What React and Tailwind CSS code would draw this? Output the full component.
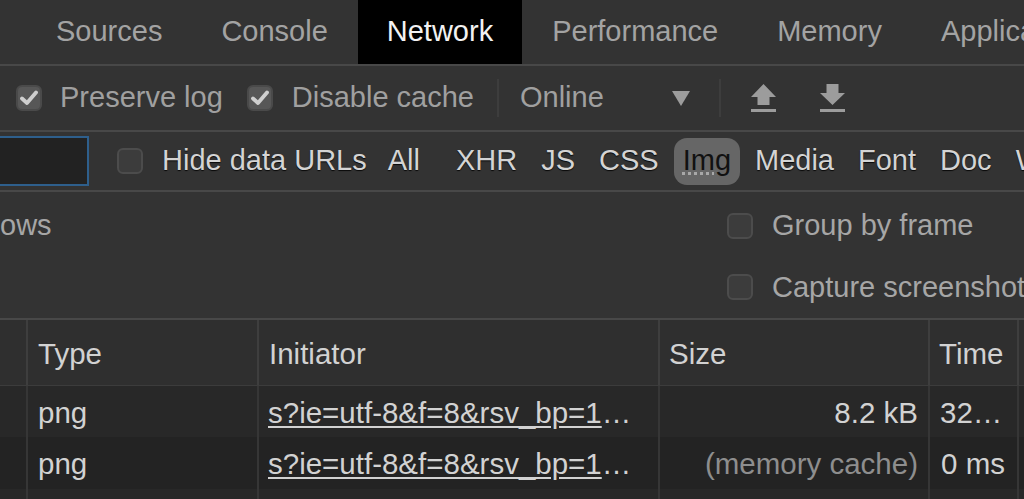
import React from 'react';

const FONT = "font-['Liberation_Sans',Arial,sans-serif]";

const Checkbox = ({ checked }) => (
  <div
    className={`w-[26px] h-[26px] rounded-[6px] border-2 flex items-center justify-center shrink-0 ${
      checked ? 'bg-[#575757] border-[#4a4a4a]' : 'bg-[#3c3c3c] border-[#4c4c4c]'
    }`}
  >
    {checked && (
      <svg width="18" height="16" viewBox="0 0 18 16">
        <path d="M2 8.5 L7 13 L16 2.5" fill="none" stroke="#cfcfcf" strokeWidth="3.8" strokeLinecap="round" strokeLinejoin="round" />
      </svg>
    )}
  </div>
);

const tabs = ['Sources', 'Console', 'Network', 'Performance', 'Memory', 'Application'];
const filters = ['XHR', 'JS', 'CSS', 'Img', 'Media', 'Font', 'Doc', 'WS'];

const Line = () => <div className="h-[2px] bg-[#484848]" />;

const App = () => {
  return (
    <div className={`w-[1024px] h-[499px] overflow-hidden bg-[#333333] ${FONT}`}>
      {/* Tabs */}
      <div className="h-[64px] flex items-stretch pl-[27px] whitespace-nowrap">
        {tabs.map((t) => (
          <div
            key={t}
            className={`px-[29px] mr-[1px] flex items-center text-[29px] shrink-0 ${
              t === 'Network' ? 'bg-black text-[#f2f2f2]' : 'text-[#a3a3a3]'
            }`}
          >
            {t}
          </div>
        ))}
      </div>
      <Line />

      {/* Network toolbar */}
      <div className="h-[64px] flex items-center pl-[16px] text-[29px] text-[#a0a0a0] whitespace-nowrap">
        <Checkbox checked />
        <span className="ml-[18px]">Preserve log</span>
        <div className="ml-[24px]"><Checkbox checked /></div>
        <span className="ml-[19px]">Disable cache</span>
        <div className="ml-[23px] w-[2px] h-[38px] bg-[#3d3d3d]" />
        <span className="ml-[21px]">Online</span>
        <svg className="ml-[68px]" width="18" height="15" viewBox="0 0 18 15">
          <path d="M0 0 H18 L9 15 Z" fill="#9c9c9c" />
        </svg>
        <div className="ml-[29px] w-[2px] h-[38px] bg-[#3d3d3d]" />
        <svg className="ml-[29px]" width="27" height="30" viewBox="0 0 27 30">
          <path d="M13.5 1 L26 14 H19.5 V22 H7.5 V14 H1 Z" fill="#9c9c9c" />
          <rect x="1" y="26" width="25" height="3" fill="#9c9c9c" />
        </svg>
        <svg className="ml-[42px]" width="27" height="30" viewBox="0 0 27 30">
          <path d="M13.5 22 L26 10 H19.5 V1 H7.5 V10 H1 Z" fill="#9c9c9c" />
          <rect x="1" y="26" width="25" height="3" fill="#9c9c9c" />
        </svg>
      </div>
      <Line />

      {/* Filter bar */}
      <div className="h-[58px] flex items-center text-[29px] text-[#d4d4d4] whitespace-nowrap [text-shadow:0_1px_1px_rgba(0,0,0,0.85)]">
        <div className="w-[89px] h-[50px] bg-[#222222] border-y-2 border-r-2 border-[#2e5f8c] shrink-0" />
        <div className="ml-[28px]"><Checkbox /></div>
        <span className="ml-[19px]">Hide data URLs</span>
        <span className="ml-[12px] px-[9px]">All</span>
        <div className="ml-[2px] w-[2px] h-[38px] bg-[#3d3d3d]" />
        <div className="ml-[16px] flex items-center gap-[6px]">
          {filters.map((f) =>
            f === 'Img' ? (
              <span
                key={f}
                className="px-[9px] h-[47px] flex items-center rounded-[13px] bg-[#666666] text-[#111111] [text-shadow:none] underline decoration-dotted decoration-[#a8a8a8] underline-offset-[2px]"
              >
                {f}
              </span>
            ) : (
              <span key={f} className="px-[9px]">{f}</span>
            )
          )}
        </div>
      </div>
      <Line />

      {/* Settings */}
      <div className="h-[126px] pt-[3px] flex text-[29px] text-[#a6a6a6] whitespace-nowrap">
        <div className="w-[727px] shrink-0">
          <div className="h-[62px] flex items-center">ows</div>
        </div>
        <div className="flex flex-col">
          <div className="h-[62px] flex items-center gap-[19px]">
            <Checkbox />
            <span>Group by frame</span>
          </div>
          <div className="h-[62px] flex items-center gap-[19px]">
            <Checkbox />
            <span>Capture screenshots</span>
          </div>
        </div>
      </div>
      <Line />

      {/* Table */}
      <div className="text-[29.5px] text-[#d2d2d2] whitespace-nowrap">
        <div className="h-[66px] flex bg-[#2f2f2f] border-b-[1px] border-[#3c3c3c]">
          <div className="w-[28px] border-r-2 border-[#3e3e3e]" />
          <div className="w-[231px] border-r-2 border-[#3e3e3e] pl-[10px] flex items-center pt-[4px]">Type</div>
          <div className="w-[401px] border-r-2 border-[#3e3e3e] pl-[10px] flex items-center pt-[4px]">Initiator</div>
          <div className="w-[270px] border-r-2 border-[#3e3e3e] pl-[9px] flex items-center pt-[4px]">Size</div>
          <div className="w-[89px] border-r-2 border-[#3e3e3e] pl-[9px] flex items-center pt-[4px]">Time</div>
          <div className="flex-1" />
        </div>
        {[
          { size: '8.2 kB', dim: false, time: '32…', left: true, bg: 'bg-[#282828]', h: 'h-[51px]' },
          { size: '(memory cache)', dim: true, time: '0 ms', left: false, bg: 'bg-[#232323]', h: 'h-[52px]' },
        ].map((r, i) => (
          <div key={i} className={`flex ${r.bg} ${r.h}`}>
            <div className="w-[28px] border-r-2 border-[#363636]" />
            <div className="w-[231px] border-r-2 border-[#363636] pl-[10px] flex items-center pt-[3px]">png</div>
            <div className="w-[401px] border-r-2 border-[#363636] pl-[9px] flex items-center pt-[3px]">
              <span className="underline underline-offset-[3px]">s?ie=utf-8&amp;f=8&amp;rsv_bp=1</span>
              <span>…</span>
            </div>
            <div className={`w-[270px] border-r-2 border-[#363636] pr-[10px] flex items-center justify-end pt-[3px] ${r.dim ? 'text-[#8e8e8e]' : ''}`}>
              {r.size}
            </div>
            <div className={`w-[89px] border-r-2 border-[#363636] flex items-center pt-[3px] ${r.left ? 'pl-[10px]' : 'justify-end pr-[12px]'}`}>
              {r.time}
            </div>
            <div className="flex-1" />
          </div>
        ))}
        <div className="h-[20px] flex bg-[#282828]">
          <div className="w-[28px] border-r-2 border-[#363636]" />
          <div className="w-[231px] border-r-2 border-[#363636]" />
          <div className="w-[401px] border-r-2 border-[#363636]" />
          <div className="w-[270px] border-r-2 border-[#363636]" />
          <div className="w-[89px] border-r-2 border-[#363636]" />
        </div>
      </div>
    </div>
  );
};

export default App;
